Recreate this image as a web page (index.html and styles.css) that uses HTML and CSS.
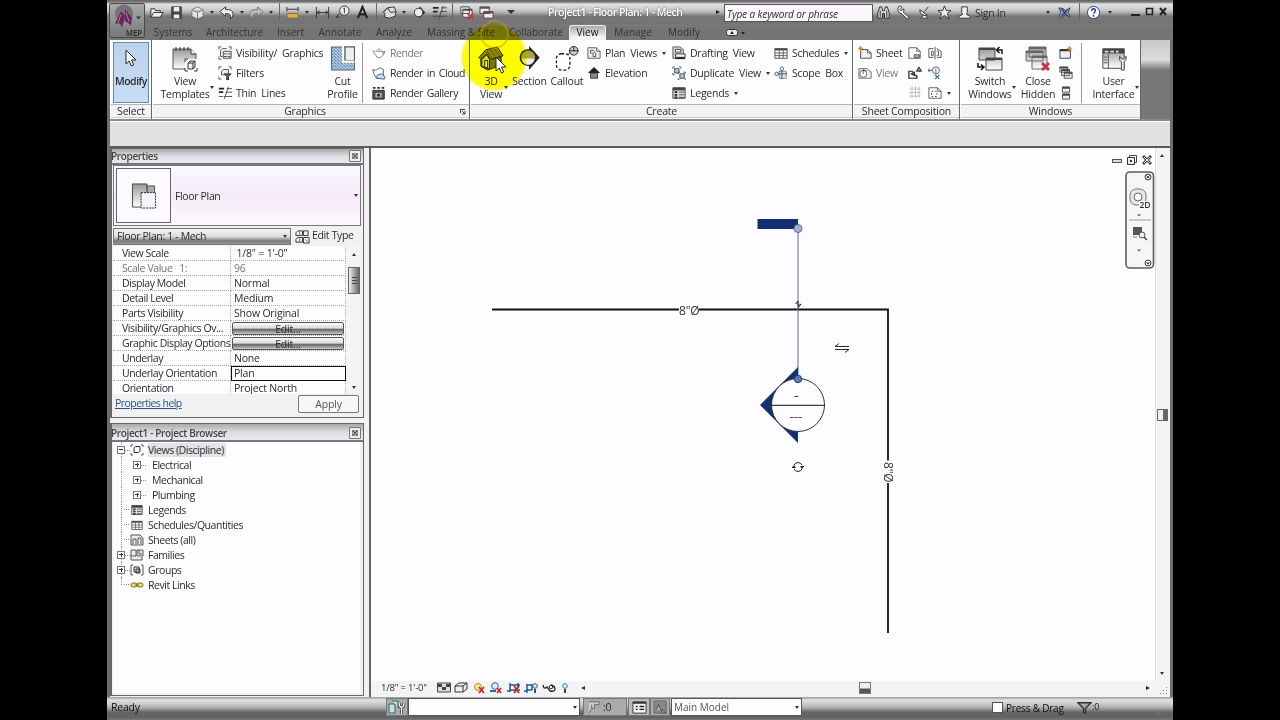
FILE: index.html
```html
<!DOCTYPE html>
<html lang="en">
<head>
    <meta charset="UTF-8">
    <title>Project1 - Floor Plan: 1 - Mech</title>
    <link rel="stylesheet" href="styles.css">
</head>
<body>
<svg class="defs">
    <defs>
        <linearGradient id="gr" x1="0" y1="0" x2="0" y2="1"><stop offset="0" stop-color="#999"/><stop offset="1" stop-color="#fff"/></linearGradient>
        <pattern id="hatch" width="3" height="3" patternUnits="userSpaceOnUse"><rect width="3" height="3" fill="#d3e1ef"/><path d="M0 0l3 3" stroke="#4478a8"/></pattern>
    </defs>
    <symbol id="open" viewBox="0 0 16 16"><path d="M2 13V4h4l1 2h5v2M2 13l3-5h10l-3 5z" fill="#eee" stroke="#333"/></symbol>
    <symbol id="save" viewBox="0 0 16 16"><path d="M3 2h10v12H3z" fill="#444" stroke="#333"/><path d="M5 2h6v5H5zM5 10h6v4H5z" fill="#eee"/></symbol>
    <symbol id="cube" viewBox="0 0 16 16"><path d="M2 5l6-3 6 3v7l-6 3-6-3zM2 5l6 3 6-3M8 8v7" fill="#e4e4e4" stroke="#777"/></symbol>
    <symbol id="undo" viewBox="0 0 16 16"><path d="M1 7l6-5v3q8-1 8 5 0 3-3 5 2-6-5-6v3z" fill="#eee" stroke="#333"/></symbol>
    <symbol id="redo" viewBox="0 0 16 16"><path d="M15 7L9 2v3Q1 4 1 10q0 3 3 5-2-6 5-6v3z" fill="#bbb" stroke="#777"/></symbol>
    <symbol id="measure" viewBox="0 0 16 16"><path d="M2 2v5M14 2v5M2 4.500h12" stroke="#333" fill="none"/><path d="M2 9h12v5H2z" fill="#e3ad3d" stroke="#765"/></symbol>
    <symbol id="dim" viewBox="0 0 16 16"><path d="M1.500 2v12M14.500 2v12M2 8h12M5 6L2 8l3 2M11 6l3 2-3 2" stroke="#333" fill="none"/></symbol>
    <symbol id="tag" viewBox="0 0 16 16"><circle cx="10" cy="6" r="5" fill="#eee" stroke="#333"/><path d="M5 9l-4 4h4M9 4l1-1v6" stroke="#333" fill="none"/></symbol>
    <symbol id="letter" viewBox="0 0 16 16"><path d="M3 14L8 2l5 12M5 10h6" stroke="#222" stroke-width="2.200" fill="none"/></symbol>
    <symbol id="house" viewBox="0 0 16 16"><path d="M1 8l5-5 7-1 2 5-1 5-6 2-5-1V8" fill="#ddd" stroke="#333"/><path d="M1 8l5-5 3 5 6-1" fill="none" stroke="#333"/></symbol>
    <symbol id="sect" viewBox="0 0 16 16"><path d="M8 1l6 7-6 6z" fill="#222"/><circle cx="7" cy="8" r="4.500" fill="#eee" stroke="#333"/></symbol>
    <symbol id="thin" viewBox="0 0 16 16"><path d="M1 3h6M1 7h5" stroke="#222" stroke-width="2"/><path d="M1 12h5M7 15l5-14M10 3h6M9 7h7M7 12h9" stroke="#445" fill="none"/></symbol>
    <symbol id="closewin" viewBox="0 0 16 16"><path d="M2 2h9v7H2zM4 5h10v8H4z" fill="#eee" stroke="#444"/><path d="M4 5h10" stroke="#444" stroke-width="2"/><path d="M9 9l6 6M15 9l-6 6" stroke="#c33" stroke-width="2"/></symbol>
    <symbol id="switchwin" viewBox="0 0 16 16"><path d="M1 2h10v7H1zM5 7h10v7H5z" fill="#f6e6ea" stroke="#444"/><path d="M1 3h10M5 8h10" stroke="#555" stroke-width="2"/></symbol>
    <symbol id="binoc" viewBox="0 0 16 16"><path d="M2 14V8l2-6h2l1 4h2l1-4h2l2 6v6h-5V9H7v5z" fill="#ddd" stroke="#222"/><path d="M4.500 6v7M11.500 6v7" stroke="#222"/></symbol>
    <symbol id="wrench" viewBox="0 0 16 16"><path d="M2 4q0-3 3-3l1 2-2 2 2 1 2-2q1 2 0 4l6 5-2 2-6-6Q2 9 2 4z" fill="#f4f4f4" stroke="#333"/></symbol>
    <symbol id="dish" viewBox="0 0 16 16"><path d="M3 5q0 7 8 6L3 5zM7 11l-3 3h8l-3-3M8 7l4-5" fill="#eee" stroke="#333"/></symbol>
    <symbol id="star" viewBox="0 0 16 16"><path d="M8 1l2 5h5l-4 3 2 6-5-4-5 4 2-6-4-3h5z" fill="#eee" stroke="#333"/></symbol>
    <symbol id="person" viewBox="0 0 16 16"><path d="M5 2h6v6l-1 2 4 2v2H2v-2l4-2-1-2z" fill="#f4f4f4" stroke="#333"/></symbol>
    <symbol id="exch" viewBox="0 0 16 16"><path d="M2 3l5 1 2 2 5-3-2 5 2 5-5-3-3 3-4 0 2-5z" fill="#8ea0c0" stroke="#334668"/><path d="M5 4l6 8M11 5l-6 7" stroke="#334668" stroke-width="1.500"/></symbol>
    <symbol id="help" viewBox="0 0 16 16"><circle cx="8" cy="8" r="6.500" fill="#fff" stroke="#2b3d70"/><path d="M6 6.500Q6 4 8 4t2 2q0 1-2 3M8 10.500v2" fill="none" stroke="#1d3c8c" stroke-width="1.500"/></symbol>
    <symbol id="cursor" viewBox="0 0 12 18"><path d="M1 1v14l3.200-3 2.300 5 2.200-1-2.200-5H11z" fill="#fff" stroke="#222"/></symbol>

    <symbol id="templates" viewBox="0 0 26 26"><path d="M1 3h18l5 5v15H1z" fill="url(#gr)" stroke="#555"/><path d="M4 1v4M8 1v4M12 1v4M16 1v4" stroke="#333"/><path d="M19 3v5h5" fill="#fff" stroke="#333"/><path d="M13 13h12v12H13z" fill="#fff"/><path d="M16 17l2-2h5v6l-2 2h-5zM16 17h5v6M21 17l2-2" fill="#eee" stroke="#333"/><path d="M13 16v-3h3M13 22v3h3M25 22v3h-3" fill="none" stroke="#333"/></symbol>
    <symbol id="vg" viewBox="0 0 16 16"><path d="M1 4V1h3M12 1h3v3M1 12v3h3" fill="none" stroke="#444"/><path d="M3 5l2-2h5" fill="none" stroke="#444"/><path d="M6 6h9v8H6z" fill="#eee" stroke="#333"/><path d="M7 9h3M11 9h3M7 12h3M11 12h3M3 5v7h2" stroke="#333" fill="none"/></symbol>
    <symbol id="filter" viewBox="0 0 16 16"><path d="M1 4V1h3M12 1h3v3M1 12v3h3" fill="none" stroke="#444"/><path d="M4 6l2-2h6v6H4z" fill="#eee" stroke="#444"/><path d="M7 9h8l-3 3v4h-2v-4z" fill="#666" stroke="#222"/></symbol>
    <symbol id="cut" viewBox="0 0 24 25"><path d="M1 1h22v22H1z" fill="url(#hatch)" stroke="#567"/><path d="M14 1h9v13h-9z" fill="#eee" stroke="#555"/><path d="M12 0v15h11" fill="none" stroke="#fff" stroke-width="2"/></symbol>
    <symbol id="pot" viewBox="0 0 16 16"><path d="M4 6h8l1 4-3 3H6L4 10 1 6h2M12 7l3-1-2 4M6 5l2-2 2 2" fill="#fff" stroke="#777"/></symbol>
    <symbol id="cloud" viewBox="0 0 16 16"><path d="M1 4l3 1 5-3 4 2v7l-4 3H5L2 9z" fill="#fff" stroke="#456"/><path d="M6 14q-2-4 2-4 3-3 5 1 3 0 1 4z" fill="#cddceb" stroke="#357"/></symbol>
    <symbol id="gallery" viewBox="0 0 16 16"><path d="M1 2h3M6 2h3M11 2h3" stroke="#333" stroke-width="2"/><path d="M1 5h13v10H1z" fill="#555" stroke="#222"/><path d="M4 8h7v5H4z" fill="#bbb"/><circle cx="7.500" cy="10.500" r="1.800" fill="#333"/></symbol>
    <symbol id="bighouse" viewBox="0 0 27 27"><path d="M3 12v9l7 4 14-5V10z" fill="#77771f" stroke="#222"/><path d="M1 12L8 4l12-3 6 9-13 4-4-6-6 6z" fill="#8c8a20" stroke="#222"/><path d="M9 5l5 7M13 4l5 7M17 3l5 7" stroke="#555"/><path d="M4 14l5-5 3 5v10l-8-3z" fill="#e2df35" stroke="#222"/><path d="M7 15h3v8l-3-1z" fill="#fff" stroke="#222"/></symbol>
    <symbol id="bigsect" viewBox="0 0 24 27"><path d="M11 0l11 12-11 13z" fill="#222"/><circle cx="10" cy="12" r="8" fill="#a9a63b" stroke="#222" stroke-width="1.500"/><path d="M3.500 13h13a6.500 6.500 0 0 1-13 0z" fill="#eee"/></symbol>
    <symbol id="callout" viewBox="0 0 26 27"><rect x="2" y="8" width="14" height="17" rx="5" fill="none" stroke="#222" stroke-width="1.400" stroke-dasharray="3 2"/><path d="M14 9l3-3" stroke="#222"/><circle cx="20" cy="5" r="4.500" fill="#ccc" stroke="#222"/><path d="M15 5h10M20 1v4" stroke="#222"/></symbol>
    <symbol id="plan" viewBox="0 0 16 16"><path d="M1 2h10l4 4v8H1z" fill="#eee" stroke="#555"/><path d="M4 5h3l3 4v3H7V8H4zM11 2v4h4" fill="#fff" stroke="#444"/></symbol>
    <symbol id="elev" viewBox="0 0 16 16"><path d="M8 1l7 7H1z" fill="#222"/><path d="M4 8h8v6H4z" fill="#888" stroke="#333"/></symbol>
    <symbol id="draft" viewBox="0 0 16 16"><path d="M1 1h8l4 3v10H1z" fill="#ccc" stroke="#555"/><path d="M4 4h6v3H4z" fill="#fff" stroke="#444"/><path d="M4 9h11v4H4z" fill="#eee" stroke="#333"/><path d="M4 14h11" stroke="#222" stroke-width="2"/></symbol>
    <symbol id="dup" viewBox="0 0 16 16"><path d="M3 3h5v5H3zM9 9h5v5H9z" fill="#adc9e0" stroke="#345"/><path d="M1 3V1h2M8 1h2v2M1 8v2h2M7 9V7h2M15 9V7h-2M7 14v2h2M15 14v2" fill="none" stroke="#345"/></symbol>
    <symbol id="legend" viewBox="0 0 16 16"><path d="M1 2h14v12H1z" fill="#ddd" stroke="#333"/><path d="M1 3.500h14" stroke="#444" stroke-width="3"/><path d="M3 7h3M3 10h3M3 13h3" stroke="#222" stroke-width="2"/><path d="M8 7h6M8 10h6M8 13h6" stroke="#444"/></symbol>
    <symbol id="sched" viewBox="0 0 16 16"><path d="M1 3h14v11H1z" fill="#fff" stroke="#444"/><path d="M1 4h14" stroke="#444" stroke-width="2"/><path d="M1 8h14M1 11h14M6 4v10M10.500 4v10" stroke="#555"/></symbol>
    <symbol id="scope" viewBox="0 0 16 16"><circle cx="9" cy="3" r="2" fill="none" stroke="#457"/><circle cx="3" cy="9" r="2" fill="none" stroke="#457"/><path d="M6 6h8v8H6z" fill="#dde7ef" stroke="#456" stroke-dasharray="2 1"/><path d="M9 5v10M5 9h10" stroke="#345"/></symbol>
    <symbol id="sheet" viewBox="0 0 16 16"><path d="M3 4h8l4 4v6H3zM11 4v4h4" fill="#eee" stroke="#444"/><path d="M3 0v6M0 3h6M1 1l4 4M5 1L1 5" stroke="#c8801f"/></symbol>
    <symbol id="sview" viewBox="0 0 16 16"><path d="M1 3h9l5 4v7H1z" fill="#eee" stroke="#666"/><circle cx="6" cy="9" r="4" fill="#fff" stroke="#555"/><path d="M6 9V4l4 2" fill="none" stroke="#555"/></symbol>
    <symbol id="tblock" viewBox="0 0 16 16"><path d="M1 2h9l4 4v8H1zM10 2v4h4" fill="#fff" stroke="#555"/><path d="M7 10h6v3H7z" fill="#bbb" stroke="#444"/></symbol>
    <symbol id="match" viewBox="0 0 16 16"><path d="M6 3H1v10h5M10 3l5 3v7h-5M8 1v14" fill="none" stroke="#444"/><path d="M4 6h2v5H4zM10 6h2v5h-2" fill="none" stroke="#555"/></symbol>
    <symbol id="rev" viewBox="0 0 16 16"><path d="M6 6H1v8h9v-4M4 9l3-2 1 4z" fill="none" stroke="#222" stroke-width="1.400"/><path d="M9.500 6l3-5 3 5z" fill="#888" stroke="#222"/></symbol>
    <symbol id="grid" viewBox="0 0 16 16"><path d="M2 3.500h13M2 7.500h13M2 11.500h13M4.500 1v13M8.500 1v13M12.500 1v13" fill="none" stroke="#777" stroke-dasharray="1 1.200"/></symbol>
    <symbol id="act" viewBox="0 0 16 16"><path d="M0 5h5M2 3L0 5l2 2" fill="none" stroke="#444"/><circle cx="9" cy="5" r="4" fill="none" stroke="#555"/><path d="M9 3v5" stroke="#555"/><path d="M8 10l5 5M13 10l-5 5" stroke="#357a9c" stroke-width="1.500"/></symbol>
    <symbol id="vref" viewBox="0 0 16 16"><path d="M1 2h10l4 4v8H1zM11 2v4h4" fill="#fff" stroke="#555"/><path d="M4 6h6v6H4z" fill="none" stroke="#444" stroke-dasharray="2 2"/></symbol>
    <symbol id="bigswitch" viewBox="0 0 26 26"><path d="M2 2h16v12H2zM9 12h16v12H9z" fill="url(#gr)" stroke="#444"/><path d="M2 3h16M9 13h16" stroke="#444" stroke-width="2"/><path d="M20 4h5v4M22.500 1L19.500 4l3 3M1 17v4h5M4 18.500l3 2.500-3 3" fill="none" stroke="#111" stroke-width="1.500"/></symbol>
    <symbol id="bigclose" viewBox="0 0 26 26"><path d="M4 1h17v10H4zM1 5h17v10H1zM7 10h15v13H7z" fill="url(#gr)" stroke="#666"/><path d="M4 2h17M1 6h17M7 11h15" stroke="#666" stroke-width="2"/><path d="M17 17l7 7M24 17l-7 7" stroke="#c43b45" stroke-width="3"/></symbol>
    <symbol id="newwin" viewBox="0 0 16 16"><path d="M1 4h12v10H1z" fill="#eee" stroke="#333"/><path d="M1 5h12" stroke="#333" stroke-width="2"/><path d="M12 0v6M9 3h6M10 1l4 4M14 1l-4 4" stroke="#d48a2a"/></symbol>
    <symbol id="cascade" viewBox="0 0 16 16"><path d="M1 1h9v6H1zM3 4h9v7H3zM6 7h9v7H6z" fill="#eee" stroke="#444"/><path d="M1 2h9M3 5h9M6 8h9" stroke="#444" stroke-width="1.500"/></symbol>
    <symbol id="tile" viewBox="0 0 16 16"><path d="M4 1h8v6H4zM4 9h8v6H4z" fill="#eee" stroke="#444"/><path d="M4 2h8M4 10h8" stroke="#444" stroke-width="2"/></symbol>
    <symbol id="ui" viewBox="0 0 28 26"><path d="M2 2h23v21H2z" fill="url(#gr)" stroke="#444"/><path d="M2 4.500h23" stroke="#444" stroke-width="5"/><path d="M4 5h4M10 5h4M16 5h3" stroke="#ddd" stroke-width="2"/><path d="M8 8v15M3 11h4M3 14h4M3 17h4" stroke="#555"/><path d="M20 10q-1 5 2 6v9h3v-9q3-2 2-6l-2 3h-3z" fill="#eee" stroke="#444"/></symbol>

    <symbol id="fplan" viewBox="0 0 26 27"><path d="M16 3h8v8h-8z" fill="#aaa" stroke="#555"/><path d="M1 1h15v24H1z" fill="url(#gr)" stroke="#444"/><path d="M10 10h15v16H10z" fill="#f7f3fa" stroke="#222" stroke-dasharray="2 1"/></symbol>
    <symbol id="etype" viewBox="0 0 16 16"><path d="M3 2h5v5H1V4zM9 2h5v5H9zM3 9h5v5H1v-3zM9 9h6v6H9z" fill="#eee" stroke="#333"/><path d="M5 2v5M5 9v5M11 11l3 3" stroke="#777"/></symbol>
    <symbol id="tviews" viewBox="0 0 14 12"><path d="M3 1H1v2M1 9v2h2M11 1h2v2M13 9v2h-2" fill="none" stroke="#555"/><path d="M4 4l1.500-1.500H10V7L8.500 8.500H4z" fill="#fff" stroke="#333"/></symbol>
    <symbol id="tsheets" viewBox="0 0 14 12"><path d="M1 1h9l3 3v7H1z" fill="#eee" stroke="#555"/><path d="M3 10V5h3v5M8 10V4h3v6" fill="none" stroke="#555"/></symbol>
    <symbol id="tfam" viewBox="0 0 14 12"><path d="M1 1h5v6H1zM7 1h6v6H7zM1 7v4h11V8" fill="#eee" stroke="#555"/><path d="M9 1v4h3" fill="none" stroke="#555"/></symbol>
    <symbol id="tgroup" viewBox="0 0 14 12"><path d="M3 1H1v10h2M11 1h2v10h-2" fill="none" stroke="#555"/><path d="M4 3h5v5H4zM6 5h4v4H6z" fill="#ddd" stroke="#333"/></symbol>
    <symbol id="tlink" viewBox="0 0 14 12"><rect x="1" y="4" width="6" height="4" rx="2" fill="#eedc8b" stroke="#84691b"/><rect x="7" y="4" width="6" height="4" rx="2" fill="#eedc8b" stroke="#84691b"/><path d="M5 6h4" stroke="#84691b"/></symbol>

    <symbol id="v1" viewBox="0 0 14 12"><path d="M.5 1h13v9H.5z" fill="#ddd" stroke="#444"/><path d="M1 2h4v3H1zM9 2h4v3H9zM5 5h4v3H5z" fill="#444"/></symbol>
    <symbol id="v2" viewBox="0 0 14 12"><path d="M1 4l4-3h8v6l-4 3H1z" fill="#eee" stroke="#333"/><path d="M1 4h8v6M9 4l4-3" fill="none" stroke="#333"/></symbol>
    <symbol id="v3" viewBox="0 0 14 12"><circle cx="6" cy="5" r="3.500" fill="#ffe9a0" stroke="#c28a1c"/><path d="M7 5l5 6M12 5l-5 6" stroke="#c22" stroke-width="1.700"/></symbol>
    <symbol id="v4" viewBox="0 0 14 12"><circle cx="6" cy="4" r="3.300" fill="#def" stroke="#368"/><path d="M1 9h6" stroke="#368" stroke-width="2"/><path d="M8 6l4 5M12 6l-4 5" stroke="#c22" stroke-width="1.700"/></symbol>
    <symbol id="v5" viewBox="0 0 14 12"><path d="M3 1v9M0 9h3M3 3h10M3 8h10M11 1v4" fill="none" stroke="#259" stroke-width="1.500"/><path d="M7 4l5 7M12 4l-5 7" stroke="#c22" stroke-width="1.700"/></symbol>
    <symbol id="v6" viewBox="0 0 14 12"><path d="M3 2v9M0 9h3M3 3h6M3 8h5M8 3v5" fill="none" stroke="#259" stroke-width="1.500"/><circle cx="11" cy="4" r="2.300" fill="#def" stroke="#357"/><path d="M11 7v4" stroke="#357" stroke-width="2"/></symbol>
    <symbol id="v7" viewBox="0 0 14 12"><path d="M1 3q1 5 4 2l3 4q5 1 5-2 0-3-4-4" fill="none" stroke="#222" stroke-width="1.300"/><circle cx="9" cy="5" r="1.800" fill="none" stroke="#222"/></symbol>
    <symbol id="v8" viewBox="0 0 14 12"><circle cx="6" cy="4" r="2.300" fill="#dff" stroke="#37a"/><path d="M6 7v4" stroke="#345" stroke-width="2"/></symbol>
    <symbol id="s1" viewBox="0 0 18 16"><path d="M1 5h6v9H1zM4 2h6v7" fill="#cfe0d8" stroke="#276b6b"/><path d="M11 4q0 4 2.500 4v7M16 4q0 4-2.500 4" fill="none" stroke="#333" stroke-width="3"/><path d="M11 4q0 4 2.500 4v7M16 4q0 4-2.500 4" fill="none" stroke="#eee" stroke-width="1.500"/></symbol>
    <symbol id="s2" viewBox="0 0 16 16"><path d="M2 2h11v3H8v4H5l-3 5M5 5v4" fill="#ccc" stroke="#666"/></symbol>
    <symbol id="s3" viewBox="0 0 16 16"><path d="M1 2h14v12H1z" fill="#f4f4f4" stroke="#333"/><path d="M1 3h14" stroke="#333" stroke-width="2"/><path d="M4 7h2M4 10h2M8 7h5M8 10h5" stroke="#222" stroke-width="1.500"/></symbol>
    <symbol id="s4" viewBox="0 0 16 16"><path d="M1 1h13v13H1z" fill="#888" stroke="#666"/><path d="M4 10l2-5 2 5M9 10l5 4h-4z" fill="#ccc" stroke="#444"/></symbol>
    <symbol id="funnel" viewBox="0 0 16 16"><path d="M1 3h14L9 9v5H7V9z" fill="#aaa" stroke="#333" stroke-width="1.500"/></symbol>
    <symbol id="xbox" viewBox="0 0 12 12"><path d="M.5.5h11v11H.5z" fill="#eee" stroke="#777"/><path d="M3.500 3.500h5v5h-5z" fill="none" stroke="#999"/><path d="M3.500 3.500l5 5M8.500 3.500l-5 5" stroke="#555" stroke-width="1.300"/></symbol>
</svg>

<div class="app">
    <div class="titlebar">
        <div class="appbtn">
            <svg class="applogo" viewBox="0 0 34 24"><circle cx="14" cy="9" r="9" fill="#77717a"/><path d="M11 7l-6 12 5 0 2 4 3-12zM15 5l7 8-1 8-6-5z" fill="#6a2458"/><path d="M11 10l-3 8M16 8l3 9" stroke="#b884aa"/><path d="M26 12h5l-2.500 3z" fill="#333"/></svg>
            <span>MEP</span>
        </div>
        <div class="titleright">
            <div class="titlerow">
                <div class="qat">
                    <svg class="i16"><use href="#open"/></svg>
                    <svg class="i16"><use href="#save"/></svg>
                    <svg class="i16"><use href="#cube"/></svg>
                    <i class="dd"></i>
                    <svg class="i16"><use href="#undo"/></svg>
                    <i class="dd"></i>
                    <svg class="i16"><use href="#redo"/></svg>
                    <i class="dd"></i>
                    <b class="vsep"></b>
                    <svg class="i16"><use href="#measure"/></svg>
                    <i class="dd"></i>
                    <svg class="i16"><use href="#dim"/></svg>
                    <svg class="i16"><use href="#tag"/></svg>
                    <svg class="i16"><use href="#letter"/></svg>
                    <b class="vsep"></b>
                    <svg class="i16"><use href="#house"/></svg>
                    <i class="dd"></i>
                    <svg class="i16"><use href="#sect"/></svg>
                    <svg class="i16"><use href="#thin"/></svg>
                    <b class="vsep"></b>
                    <svg class="i16"><use href="#closewin"/></svg>
                    <svg class="i16"><use href="#switchwin"/></svg>
                </div>
                <i class="dd custom"></i>
                <div class="doctitle">Project1 - Floor Plan: 1 - Mech</div>
                <i class="playarrow"></i>
                <div class="search">Type a keyword or phrase</div>
                <div class="info">
                    <svg class="i16"><use href="#binoc"/></svg>
                    <svg class="i16"><use href="#wrench"/></svg>
                    <svg class="i16"><use href="#dish"/></svg>
                    <svg class="i16"><use href="#star"/></svg>
                    <svg class="i16"><use href="#person"/></svg>
                </div>
                <div class="signin">Sign In</div>
                <div class="helpbar">
                    <i class="dd"></i>
                    <svg class="i16"><use href="#exch"/></svg>
                    <b class="vsep"></b>
                    <svg class="i16"><use href="#help"/></svg>
                    <i class="dd"></i>
                </div>
                <svg class="winbtns" viewBox="0 0 40 12"><path d="M2 9h9" stroke="#222" stroke-width="2"/><path d="M17.500 2.500h6v6h-6z" fill="none" stroke="#222" stroke-width="1.600"/><path d="M31 2l6 7M37 2l-6 7" stroke="#222" stroke-width="2"/></svg>
            </div>
            <div class="tabs">
                <span>Systems</span>
                <span>Architecture</span>
                <span>Insert</span>
                <span>Annotate</span>
                <span>Analyze</span>
                <span>Massing &amp; Site</span>
                <span>Collaborate</span>
                <span class="active">View</span>
                <span>Manage</span>
                <span>Modify</span>
                <svg class="mintab" viewBox="0 0 22 8"><rect x=".5" y=".5" width="11" height="6" rx="2" fill="#eee" stroke="#333"/><path d="M4 5l2-3 2 3zM15 3h4l-2 2.500z" fill="#222"/></svg>
            </div>
        </div>
    </div>

    <div class="ribbon">
        <div class="panel p-select">
            <div class="body">
                <div class="big modify"><svg class="cur"><use href="#cursor"/></svg><span>Modify</span></div>
            </div>
            <div class="ptitle">Select</div>
        </div>
        <div class="panel p-graphics">
            <div class="body">
                <div class="big"><svg class="i26"><use href="#templates"/></svg><span>View</span><span>Templates</span><i class="dd low"></i></div>
                <div class="small">
                    <div><svg class="i14"><use href="#vg"/></svg>Visibility/ Graphics</div>
                    <div><svg class="i14"><use href="#filter"/></svg>Filters</div>
                    <div><svg class="i14"><use href="#thin"/></svg>Thin Lines</div>
                </div>
                <div class="big"><svg class="i26"><use href="#cut"/></svg><span>Cut</span><span>Profile</span></div>
                <b class="psep"></b>
                <div class="small render">
                    <div class="off"><svg class="i14"><use href="#pot"/></svg>Render</div>
                    <div><svg class="i14"><use href="#cloud"/></svg>Render in Cloud</div>
                    <div><svg class="i14"><use href="#gallery"/></svg>Render Gallery</div>
                </div>
            </div>
            <div class="ptitle launch">Graphics<svg class="launcher" viewBox="0 0 6 6"><path d="M0 .5h5M.5 0v4M2 2l3 3M5 2v3H2" fill="none" stroke="#444"/></svg></div>
        </div>
        <div class="panel p-create">
            <div class="body">
                <div class="big house3d"><svg class="i26"><use href="#bighouse"/></svg><span>3D</span><span>View</span><i class="dd low"></i></div>
                <div class="big"><svg class="i26"><use href="#bigsect"/></svg><span>Section</span></div>
                <div class="big"><svg class="i26"><use href="#callout"/></svg><span>Callout</span></div>
                <div class="small">
                    <div><svg class="i14"><use href="#plan"/></svg>Plan Views<i class="dd"></i></div>
                    <div><svg class="i14"><use href="#elev"/></svg>Elevation</div>
                </div>
                <div class="small">
                    <div><svg class="i14"><use href="#draft"/></svg>Drafting View</div>
                    <div><svg class="i14"><use href="#dup"/></svg>Duplicate View<i class="dd"></i></div>
                    <div><svg class="i14"><use href="#legend"/></svg>Legends<i class="dd"></i></div>
                </div>
                <div class="small">
                    <div><svg class="i14"><use href="#sched"/></svg>Schedules<i class="dd"></i></div>
                    <div><svg class="i14"><use href="#scope"/></svg>Scope Box</div>
                </div>
                <div class="halo"></div>
                <div class="ring"></div>
                <svg class="pointer"><use href="#cursor"/></svg>
            </div>
            <div class="ptitle">Create</div>
        </div>
        <div class="panel p-sheet">
            <div class="body">
                <div class="small">
                    <div><svg class="i14"><use href="#sheet"/></svg>Sheet</div>
                    <div class="off"><svg class="i14"><use href="#sview"/></svg>View</div>
                </div>
                <div class="small">
                    <div><svg class="i14"><use href="#tblock"/></svg></div>
                    <div><svg class="i14"><use href="#rev"/></svg></div>
                    <div><svg class="i14"><use href="#grid"/></svg></div>
                </div>
                <div class="small">
                    <div><svg class="i14"><use href="#match"/></svg></div>
                    <div><svg class="i14"><use href="#act"/></svg></div>
                    <div><svg class="i14"><use href="#vref"/></svg><i class="dd"></i></div>
                </div>
            </div>
            <div class="ptitle">Sheet Composition</div>
        </div>
        <div class="panel p-windows">
            <div class="body">
                <div class="big"><svg class="i26"><use href="#bigswitch"/></svg><span>Switch</span><span>Windows</span><i class="dd low"></i></div>
                <div class="big"><svg class="i26"><use href="#bigclose"/></svg><span>Close</span><span>Hidden</span></div>
                <div class="small">
                    <div><svg class="i14"><use href="#newwin"/></svg></div>
                    <div><svg class="i14"><use href="#cascade"/></svg></div>
                    <div><svg class="i14"><use href="#tile"/></svg></div>
                </div>
                <b class="psep"></b>
                <div class="big"><svg class="i26"><use href="#ui"/></svg><span>User</span><span>Interface</span><i class="dd low"></i></div>
            </div>
            <div class="ptitle">Windows</div>
        </div>
        <div class="ribbonend"></div>
    </div>
    <div class="optionsbar"></div>

    <div class="work">
        <div class="side">
            <div class="palette props">
                <div class="phead"><span>Properties</span><svg class="i12"><use href="#xbox"/></svg></div>
                <div class="pbody">
                    <div class="typesel">
                        <div class="thumb"><svg class="i26"><use href="#fplan"/></svg></div>
                        <span>Floor Plan</span>
                        <i class="dd"></i>
                    </div>
                    <div class="typerow">
                        <div class="combo"><span>Floor Plan: 1 - Mech</span><i class="dd"></i></div>
                        <svg class="i16"><use href="#etype"/></svg>
                        <span>Edit Type</span>
                    </div>
                    <div class="gridwrap">
                        <div class="pgrid">
                            <div>View Scale</div><div>&nbsp;1/8" = 1'-0"</div>
                            <div class="off">Scale Value &nbsp; 1:</div><div class="off">96</div>
                            <div>Display Model</div><div>Normal</div>
                            <div>Detail Level</div><div>Medium</div>
                            <div>Parts Visibility</div><div>Show Original</div>
                            <div>Visibility/Graphics Ov...</div><div class="btncell"><span>Edit...</span></div>
                            <div>Graphic Display Options</div><div class="btncell"><span>Edit...</span></div>
                            <div>Underlay</div><div>None</div>
                            <div>Underlay Orientation</div><div class="focus">Plan</div>
                            <div>Orientation</div><div>Project North</div>
                        </div>
                        <div class="vscroll">
                            <i class="up"></i>
                            <div class="vthumb"></div>
                            <i class="dd"></i>
                        </div>
                    </div>
                    <div class="pfoot"><a>Properties help</a><div class="apply">Apply</div></div>
                </div>
            </div>
            <div class="palette browser">
                <div class="phead"><span>Project1 - Project Browser</span><svg class="i12"><use href="#xbox"/></svg></div>
                <div class="tree">
                    <div class="node"><i class="box minus"></i><svg class="ti"><use href="#tviews"/></svg><span class="sel">Views (Discipline)</span></div>
                    <div class="node sub"><i class="box"></i><span>Electrical</span></div>
                    <div class="node sub"><i class="box"></i><span>Mechanical</span></div>
                    <div class="node sub"><i class="box"></i><span>Plumbing</span></div>
                    <div class="node"><i class="nobox"></i><svg class="ti"><use href="#legend"/></svg><span>Legends</span></div>
                    <div class="node"><i class="nobox"></i><svg class="ti"><use href="#sched"/></svg><span>Schedules/Quantities</span></div>
                    <div class="node"><i class="nobox"></i><svg class="ti"><use href="#tsheets"/></svg><span>Sheets (all)</span></div>
                    <div class="node"><i class="box"></i><svg class="ti"><use href="#tfam"/></svg><span>Families</span></div>
                    <div class="node"><i class="box"></i><svg class="ti"><use href="#tgroup"/></svg><span>Groups</span></div>
                    <div class="node last"><i class="nobox"></i><svg class="ti"><use href="#tlink"/></svg><span>Revit Links</span></div>
                </div>
            </div>
        </div>

        <div class="view">
            <div class="viewmain">
                <svg class="drawing" viewBox="371 148 784 533">
                    <!-- ducts -->
                    <path d="M492 309.500h187M699 309.500h189v151M888 483v150" fill="none" stroke="#111" stroke-width="1.800"/>
                    <text x="679" y="314.500" class="dt">8"&#216;</text>
                    <text transform="translate(884 462) rotate(90)" class="dt">8"&#216;</text>
                    <!-- section line -->
                    <path d="M757.500 219H798v10h-40.500z" fill="#14306e"/>
                    <path d="M798 229v150" fill="none" stroke="#5d6f92"/>
                    <path d="M795.500 304l2.500-3 0 5 3-2-3 4" fill="none" stroke="#111a44"/>
                    <path d="M798 367v76L760 405z" fill="#14306e"/>
                    <circle cx="798" cy="405" r="26.500" fill="#fdfcff" stroke="#333"/>
                    <path d="M771.500 405.300h53.500" stroke="#111"/>
                    <path d="M794.500 396.500h3.500" stroke="#333"/>
                    <path d="M790 417.500h12" stroke="#555" stroke-dasharray="3.500 .7"/>
                    <circle cx="798" cy="228.500" r="4" fill="#9db4d6" stroke="#5a6d92"/>
                    <circle cx="798" cy="379" r="3.700" fill="#5f7db4" stroke="#233d72"/>
                    <path d="M835 346.500h14M835 346.500l4-3M835 349.500h14l-4 3" fill="none" stroke="#223"/>
                    <path d="M794 465a4.500 4.500 0 0 1 8 0M802 469a4.500 4.500 0 0 1-8 0" fill="none" stroke="#222"/>
                    <path d="M791.500 468l2.500-3 2 3zM800 466h4.500l-2.500 3z" fill="#222"/>
                </svg>
                <svg class="mdi" viewBox="0 0 42 12"><rect x="1.500" y="5.500" width="9" height="3" fill="#ddd" stroke="#555"/><path d="M18.500 1.500h7v7h-7z" fill="#fff" stroke="#444"/><path d="M16.500 3.500h7v7h-7z" fill="#eee" stroke="#333"/><path d="M19 6h2v2h-2z" fill="#333"/><path d="M32 2l8 8M40 2l-8 8" stroke="#444" stroke-width="2.800"/><path d="M33 3l6 6M39 3l-6 6" stroke="#eee" stroke-width="1"/></svg>
                <svg class="navbar" viewBox="0 0 30 98">
                    <rect x="1" y="1" width="27.500" height="96" rx="4" fill="#f6f5f7" stroke="#5c5c5c" stroke-width="1.600"/>
                    <circle cx="23" cy="6" r="3" fill="#eee" stroke="#444"/><path d="M21.500 4.500l3 3M24.500 4.500l-3 3" stroke="#444"/>
                    <rect x="5" y="18" width="16" height="16" rx="6" fill="#e6e6e6" stroke="#777"/><circle cx="13" cy="26" r="4" fill="#fff" stroke="#666"/>
                    <rect x="14" y="30" width="11" height="7" fill="#f6f5f7"/>
                    <text x="14.500" y="37" class="nt">2D</text>
                    <path d="M12 43.500h4l-2 2zM12 78.500h4l-2 2z" fill="#555"/>
                    <path d="M4 49h22" stroke="#999"/>
                    <path d="M8 56h9v8H8z" fill="#555"/><path d="M8 66h4" stroke="#777"/><circle cx="17" cy="64" r="3" fill="#eee" stroke="#555"/><path d="M19 66l3 3" stroke="#444" stroke-width="1.500"/>
                    <circle cx="23" cy="92" r="3" fill="#eee" stroke="#444"/><path d="M21 91.500h4l-2 2z" fill="#333"/>
                </svg>
            </div>
            <div class="vbar">
                <i class="up"></i>
                <div class="vb2"></div>
                <i class="dd"></i>
            </div>
            <div class="viewctl">
                <span>1/8" = 1'-0"</span>
                <svg class="ti"><use href="#v1"/></svg>
                <svg class="ti"><use href="#v2"/></svg>
                <svg class="ti"><use href="#v3"/></svg>
                <svg class="ti"><use href="#v4"/></svg>
                <svg class="ti"><use href="#v5"/></svg>
                <svg class="ti"><use href="#v6"/></svg>
                <svg class="ti"><use href="#v7"/></svg>
                <svg class="ti"><use href="#v8"/></svg>
                <div class="hbar">
                    <i class="lt"></i>
                    <div class="hthumb"></div>
                    <i class="rt"></i>
                </div>
            </div>
            <div class="grip"></div>
        </div>
    </div>

    <div class="status">
        <div class="ready">Ready</div>
        <div class="sbtn s-a"><svg class="i18"><use href="#s1"/></svg></div>
        <div class="scombo c-a"><i class="dd"></i></div>
        <div class="sbtn s-b"><svg class="i16"><use href="#s2"/></svg><span>:0</span></div>
        <div class="sbtn s-c"><svg class="i16"><use href="#s3"/></svg></div>
        <div class="sbtn s-d"><svg class="i16"><use href="#s4"/></svg></div>
        <div class="scombo c-b"><span>Main Model</span><i class="dd"></i></div>
        <div class="press"><i class="check"></i>Press &amp; Drag</div>
        <div class="filt"><svg class="i16"><use href="#funnel"/></svg>:0</div>
        <div class="grip"></div>
    </div>
</div>
</body>
</html>
```
FILE: styles.css
```css
* {
    box-sizing: border-box;
}
body {
    margin: 0;
    width: 1280px;
    height: 720px;
    overflow: hidden;
    background: #000;
    font-family: "Open Sans", "Noto Sans", sans-serif;
    font-size: 10.5px;
    letter-spacing: -0.2px;
    line-height: 14px;
    color: #2c2c2c;
    white-space: nowrap;
}
svg {
    display: block;
    flex: none;
}
.defs {
    width: 0;
    height: 0;
    position: absolute;
}
.app {
    width: 1066px;
    height: 720px;
    margin-left: 107px;
    padding: 0 3px;
    background: #6e6e6e;
    display: flex;
    flex-direction: column;
}
.i12 { width: 12px; height: 12px; }
.i14 { width: 14px; height: 14px; }
.i16 { width: 15px; height: 15px; }
.i18 { width: 18px; height: 16px; }
.i26 { width: 26px; height: 26px; }
.ti { width: 14px; height: 12px; }

/* small arrows */
.dd, .up, .lt, .rt, .playarrow {
    display: block;
    flex: none;
    width: 0;
    height: 0;
    border: 2.5px solid transparent;
}
.dd { border-top: 3px solid #333; border-bottom: 0; }
.up { border-bottom: 3px solid #333; border-top: 0; }
.lt { border-right: 4px solid #333; border-left: 0; }
.rt, .playarrow { border-left: 4px solid #222; border-right: 0; }

/* title bar */
.titlebar {
    height: 40px;
    flex: none;
    margin: 0 -3px;
    padding-left: 2px;
    display: flex;
    background: linear-gradient(#666 0, #777 2px, #e2e2e2 4px, #cacaca 10px, #aaa 13px, #777 16px, #747474 24px, #7c7c7c 25px, #747474 27px, #757575 40px);
}
.appbtn {
    width: 36px;
    height: 35px;
    margin-top: 3px;
    border: 1px solid #4a4a4a;
    border-radius: 2px;
    background: linear-gradient(#a9a9a9, #787878);
}
.appbtn span {
    display: block;
    margin-top: -2px;
    padding-right: 2px;
    text-align: right;
    font-size: 8px;
    line-height: 11px;
    font-weight: 600;
}
.applogo {
    width: 34px;
    height: 25px;
}
.titleright {
    flex: 1;
}
.titlerow {
    height: 24px;
    display: flex;
    align-items: center;
}
.qat {
    margin-left: 4px;
    width: 345px;
    display: flex;
    align-items: center;
    justify-content: space-between;
}
.vsep {
    width: 1px;
    height: 18px;
    background: #666;
}
.dd.custom {
    margin-left: 13px;
    border-width: 4px 4px 0;
}
.doctitle {
    width: 136px;
    margin-left: 33px;
    color: #fff;
    letter-spacing: -0.48px;
    font-weight: 600;
    text-shadow: 0 0 2px #444;
}
.playarrow {
    margin-left: 32px;
}
.search {
    width: 149px;
    height: 18px;
    margin: 2px 0 0 4px;
    padding: 2px 2px;
    background: #fbf5fc;
    border: 1px solid #555;
    font-style: italic;
    font-size: 10px;
    letter-spacing: -0.1px;
}
.info {
    width: 96px;
    margin-left: 3px;
    display: flex;
    justify-content: space-between;
}
.signin {
    width: 74px;
    padding: 2px 0 0 3px;
    letter-spacing: -0.3px;
}
.helpbar {
    width: 66px;
    display: flex;
    align-items: center;
    justify-content: space-between;
}
.winbtns {
    margin-left: 17px;
    width: 40px;
    height: 12px;
}
.tabs {
    height: 16px;
    padding: 1px 0 0 2px;
    display: grid;
    grid-template-columns: 52px 71px 41px 58px 50px 84px 66px 37px 54px 48px 40px;
    justify-content: start;
    text-align: center;
    line-height: 15px;
    font-size: 10px;
    letter-spacing: 0;
    color: #333;
}
.tabs .active {
    background: linear-gradient(#aaa, #f4f4f4 80%);
    border: 1px solid #eee;
    border-bottom: 0;
    border-radius: 3px 3px 0 0;
    color: #111;
    line-height: 13px;
}
.mintab {
    width: 22px;
    height: 8px;
    margin: 4px 0 0 18px;
}

/* ribbon */
.ribbon {
    height: 79px;
    flex: none;
    display: flex;
    background: #fdfcff;
}
.panel {
    border-right: 1px solid #666;
}
.body {
    height: 64px;
    display: grid;
    position: relative;
}
.ptitle {
    height: 14px;
    line-height: 13px;
    background: #f3f2f4;
    border-top: 1px solid #b5b5b5;
    border-bottom: 1px solid #ccc;
    text-align: center;
    margin-left: 1px;
}
.p-select { width: 42px; }
.p-graphics { width: 318px; }
.p-create { width: 383px; }
.p-sheet { width: 107px; }
.p-windows { width: 181px; }
.p-graphics .body { grid-template-columns: 66px 108px 33px 13px 97px; }
.p-create .body { grid-template-columns: 42px 35px 40px 85px 102px 76px; }
.p-sheet .body { grid-template-columns: 50px 20px 30px; padding-left: 5px; }
.p-windows .body { grid-template-columns: 60px 36px 22px 6px 59px; }
.p-windows .small { padding-left: 3px; }
.ribbonend {
    flex: 1;
    background: linear-gradient(#c9c9c9, #dcdcdc 20px, #777 30px, #777);
}
.big {
    position: relative;
    padding-top: 6px;
    text-align: center;
    line-height: 12.500px;
}
.big svg {
    margin: 0 auto 3px;
}
.big span {
    display: block;
}
.dd.low {
    position: absolute;
    right: 4px;
    top: 46px;
}
.modify {
    width: 36px;
    height: 61px;
    margin: 2px 0 0 3px;
    border: 1px solid #6f86a5;
    background: linear-gradient(#bcd2ec, #c7dcf5);
    font-weight: 600;
    letter-spacing: -0.5px;
}
.modify .cur {
    width: 12px;
    height: 18px;
    margin-bottom: 8px;
}
.psep {
    width: 1px;
    height: 60px;
    margin: 3px 0 0 3px;
    background: #999;
}
.small {
    padding-top: 3px;
    letter-spacing: -0.25px;
    word-spacing: 2.5px;
}
.small > div {
    height: 20px;
    display: flex;
    align-items: center;
    gap: 4px;
}
.small .dd {
    margin-left: 1px;
}
.small.render {
    letter-spacing: -0.42px;
    word-spacing: 1.5px;
}
.off {
    color: #777;
}
.launch {
    position: relative;
    padding-right: 12px;
}
.launcher {
    position: absolute;
    width: 6px;
    height: 6px;
    right: 3px;
    top: 4px;
}
/* click highlight over the 3D View button */
.halo {
    position: absolute;
    left: -9px;
    top: -16px;
    width: 66px;
    height: 67px;
    border-radius: 50%;
    background: radial-gradient(#ffff00 62%, #fffb50 68%, #fffda0 71%);
    mix-blend-mode: multiply;
}
.ring {
    position: absolute;
    left: 10px;
    top: -20px;
    width: 29px;
    height: 29px;
    border-radius: 50%;
    border: 2px solid #d79a00;
    opacity: .45;
}
.pointer {
    position: absolute;
    width: 12px;
    height: 18px;
    left: 25px;
    top: 16px;
}
.optionsbar {
    height: 29px;
    flex: none;
    background: #e2e2e2;
    border-top: 2px solid #8a8a8a;
    border-bottom: 2px solid #5b5b5b;
    box-shadow: inset 0 1px 0 #fff;
}

/* palettes */
.work {
    height: 549px;
    flex: none;
    display: flex;
    background: #f1f0f2;
}
.side {
    width: 254px;
}
.palette {
    border: 1px solid #666;
    border-left-width: 2px;
    background: #f1f0f2;
}
.props {
    height: 270px;
}
.browser {
    height: 273px;
    margin-top: 5px;
}
.phead {
    height: 16px;
    padding-right: 2px;
    display: flex;
    align-items: center;
    justify-content: space-between;
    background: linear-gradient(#aaa, #dddde2 50%, #e8e8f2);
    border-bottom: 2px solid #777;
    color: #444;
    font-weight: 600;
    font-size: 10px;
    letter-spacing: -0.35px;
}
.phead span {
    margin-left: -1px;
}
.browser .phead {
    height: 18px;
    padding-top: 2px;
}
.pbody {
    padding: 0 2px 0 1px;
}
.typesel {
    height: 61px;
    padding: 2px;
    display: flex;
    align-items: center;
    border: 1px solid #777;
    background: linear-gradient(#fdf8ff, #f4ebf6 50%, #fdf8ff);
}
.thumb {
    width: 55px;
    height: 55px;
    border: 1px solid #666;
    background: #fdfaff;
    display: flex;
    align-items: center;
    justify-content: center;
}
.typesel span {
    flex: 1;
    padding-left: 4px;
    letter-spacing: -0.35px;
}
.typerow {
    height: 20px;
    display: flex;
    align-items: center;
}
.combo {
    width: 178px;
    height: 17px;
    padding: 0 3px 0 3px;
    margin-right: 6px;
    display: flex;
    align-items: center;
    justify-content: space-between;
    border: 1px solid #777;
    background: linear-gradient(#f4f4f4, #ddd 50%, #777 80%, #999);
    letter-spacing: -0.35px;
}
.typerow > svg {
    margin-left: -2px;
}
.typerow > span {
    margin: -2px 0 0 2px;
    letter-spacing: -0.35px;
}
.gridwrap {
    height: 148px;
    display: flex;
    background: #fdfcff;
}
.pgrid {
    width: 233px;
    overflow: hidden;
    display: grid;
    grid-template-columns: 118px 115px;
    grid-auto-rows: 15px;
}
.pgrid > div {
    padding-left: 3px;
    border-right: 1px dotted #aaa;
    border-bottom: 1px dotted #aaa;
}
.pgrid > div:nth-child(odd) {
    padding-left: 9px;
    letter-spacing: -0.42px;
}
.pgrid .btncell {
    padding: 1px 1px 0;
}
.btncell span {
    display: block;
    height: 13px;
    line-height: 12px;
    text-align: center;
    border: 1px solid #555;
    border-radius: 2px;
    background: linear-gradient(#f8f8f8, #ddd 45%, #666 60%, #ccc);
}
.pgrid .focus {
    border: 1px solid #111;
    line-height: 13px;
    padding-left: 2px;
}
.vscroll {
    flex: 1;
    display: flex;
    flex-direction: column;
    align-items: center;
    padding: 7px 0 5px;
    background: #f4f3f5;
}
.vthumb {
    width: 12px;
    height: 27px;
    margin: 11px 0 auto;
    border: 1px solid #666;
    background: repeating-linear-gradient(#444 0, #444 1px, transparent 1px, transparent 3px) 3px 9px / 5px 7px no-repeat, linear-gradient(90deg, #eee, #aaa 50%, #666);
}
.pfoot {
    padding: 1px 2px;
    display: flex;
    justify-content: space-between;
}
.pfoot a {
    padding-top: 1px;
    color: #2c5480;
    text-decoration: underline;
    letter-spacing: -0.55px;
}
.apply {
    width: 61px;
    height: 18px;
    line-height: 16px;
    border: 1px solid #777;
    border-radius: 2px;
    text-align: center;
    color: #555;
    background: #f7f6f8;
}
.tree {
    height: 251px;
    margin: 0 3px 0 1px;
    padding: 0 0 0 4px;
    background: #fdfcff;
}
.node {
    height: 15px;
    display: flex;
    align-items: center;
    position: relative;
}
.node::before {
    content: "";
    position: absolute;
    left: 4px;
    top: 0;
    height: 15px;
    border-left: 1px dotted #999;
}
.node.last::before {
    height: 8px;
}
.node.sub {
    padding-left: 16px;
}
.node .ti {
    margin: 0 4px 0 5px;
}
.box, .nobox {
    width: 8px;
    height: 8px;
    position: relative;
}
.box {
    border: 1px solid #777;
    background: linear-gradient(#333, #333) center / 4px 1px no-repeat, linear-gradient(#333, #333) center / 1px 4px no-repeat, #fff;
}
.box.minus {
    background: linear-gradient(#333, #333) center / 4px 1px no-repeat, #fff;
}
.nobox::after, .box::after {
    content: "";
    position: absolute;
    left: 7px;
    top: 3px;
    width: 5px;
    border-top: 1px dotted #888;
}
.node span {
    letter-spacing: -0.45px;
}
.sub span {
    margin-left: 11px;
}
.node .sel {
    background: #e3e2e4;
    padding-right: 2px;
}

/* drawing view */
.view {
    flex: 1;
    margin-left: 5px;
    border-left: 2px solid #666;
    display: grid;
    grid-template-columns: 784px 15px;
    grid-template-rows: 533px 16px;
    background: #f4f3f5;
}
.viewmain {
    position: relative;
    background: #fdfcff;
}
.drawing {
    width: 784px;
    height: 533px;
}
.dt {
    font-family: "Open Sans", sans-serif;
    font-size: 12px;
    letter-spacing: -0.2px;
    fill: #333;
}
.nt {
    font-size: 8.500px;
    fill: #333;
    font-weight: 600;
}
.mdi {
    position: absolute;
    right: 2px;
    top: 6px;
    width: 42px;
    height: 12px;
}
.navbar {
    position: absolute;
    right: 0;
    top: 23px;
    width: 30px;
    height: 98px;
}
.vbar {
    display: flex;
    flex-direction: column;
    align-items: center;
    justify-content: space-between;
    padding: 6px 2px 6px 0;
    border-left: 1px solid #ddd;
}
.vb2 {
    width: 11px;
    height: 12px;
    border: 1px solid #666;
    background: linear-gradient(90deg, #eee 50%, #666 60%);
}
.viewctl {
    display: flex;
    align-items: center;
    padding: 0 0 2px 10px;
    gap: 3.500px;
}
.viewctl span {
    width: 52px;
    font-size: 9.5px;
    letter-spacing: -0.2px;
}
.hbar {
    flex: 1;
    display: flex;
    align-items: center;
    justify-content: space-between;
    padding: 0 5px 0 4px;
}
.hthumb {
    width: 12px;
    height: 12px;
    border: 1px solid #777;
    background: linear-gradient(#eee 50%, #555 60%);
}
.grip {
    width: 8px;
    height: 8px;
    align-self: end;
    margin: 0 0 3px 4px;
    background: radial-gradient(#888 30%, transparent 45%) 0 0 / 3px 3px;
    clip-path: polygon(100% 0, 100% 100%, 0 100%);
}

/* status bar */
.status {
    flex: 1;
    display: flex;
    align-items: flex-start;
    margin: 0 -3px;
    padding: 1px 3px 0;
    background: linear-gradient(#999, #e0e0e0 3px, #c4c4c4 8px, #aaa 11px, #666 15px, #626262 20px, #777);
}
.status > div {
    height: 18px;
}
.ready {
    width: 276px;
    padding: 2px 0 0 1px;
    color: #111;
}
.sbtn {
    display: flex;
    align-items: center;
    border: 1px solid #777;
    background: #aaa;
}
.s-a { width: 22px; padding-left: 1px; }
.s-b { width: 44px; margin-left: 3px; padding-left: 3px; gap: 1px; }
.s-c { width: 22px; margin-left: 1px; padding-left: 3px; background: #bbb; }
.s-d { width: 20px; padding-left: 2px; }
.scombo {
    display: flex;
    align-items: center;
    justify-content: space-between;
    padding: 0 2px;
    background: #fdfcff;
    border: 1px solid #555;
    color: #555;
}
.c-a { width: 172px; justify-content: flex-end; }
.c-b { width: 131px; margin-left: 1px; font-size: 10px; letter-spacing: 0; }
.press {
    width: 85px;
    margin-left: 190px;
    padding-top: 1px;
    display: flex;
    align-items: center;
    gap: 3px;
    color: #111;
    font-size: 10px;
}
.check {
    width: 11px;
    height: 11px;
    background: #fff;
    border: 1px solid #555;
}
.filt {
    width: 70px;
    display: flex;
    align-items: center;
    color: #222;
    font-size: 9px;
}
.status .grip {
    height: 8px;
    margin: 0 0 6px 8px;
}
```
